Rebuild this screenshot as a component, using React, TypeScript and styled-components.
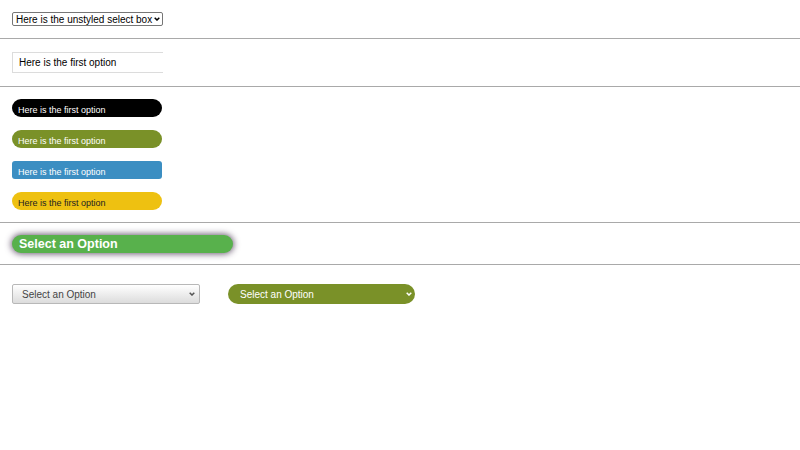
import React from "react";
import styled, { createGlobalStyle } from "styled-components";

const Global = createGlobalStyle`
  html, body { margin: 0; padding: 0; background: #fff; }
  body { font-family: "Liberation Sans", Arial, sans-serif; }
`;

const Page = styled.div`
  display: flex;
  flex-direction: column;
  width: 800px;
`;

const Section = styled.div<{ $pt: number; $pb: number; $gap?: number; $row?: boolean }>`
  display: flex;
  flex-direction: ${(p) => (p.$row ? "row" : "column")};
  align-items: flex-start;
  gap: ${(p) => p.$gap ?? 0}px;
  padding: ${(p) => p.$pt}px 12px ${(p) => p.$pb}px 12px;
`;

const Divider = styled.div`
  height: 1px;
  background: #a9a9a9;
`;

const Unstyled = styled.select`
  appearance: none;
  font-family: "Liberation Sans", Arial, sans-serif;
  font-size: 10px;
  width: 151px;
  height: 14px;
  padding: 0 0 0 3px;
  border: 1px solid #767676;
  border-radius: 2px;
  background: #fff;
  color: #000;
  outline: none;
`;

const Clip = styled.div`
  width: 151px;
  height: 21px;
  overflow: hidden;
`;

const BorderedSelect = styled.select`
  appearance: none;
  width: 190px;
  height: 21px;
  border: 1px solid #dcdcdc;
  background: #fff;
  padding: 0 0 0 6px;
  font-family: "Liberation Sans", Arial, sans-serif;
  font-size: 10px;
  color: #000;
  outline: none;
`;

const Pill = styled.div<{ $bg: string; $radius: number }>`
  width: 150px;
  height: 18px;
  overflow: hidden;
  background: ${(p) => p.$bg};
  border-radius: ${(p) => p.$radius}px;
`;

const PillSelect = styled.select<{ $fg: string }>`
  appearance: none;
  width: 180px;
  height: 18px;
  border: none;
  background: transparent;
  padding: 0 0 0 6px;
  font-family: "Liberation Sans", Arial, sans-serif;
  font-size: 9px;
  color: ${(p) => p.$fg};
  outline: none;
`;

const BigGreen = styled.select`
  appearance: none;
  width: 221px;
  height: 18px;
  border: none;
  border-radius: 9px;
  background: #58b14c;
  box-shadow: 0 0 6px 1px rgba(60, 40, 70, 0.75);
  padding: 0 0 0 7px;
  font-family: "Liberation Sans", Arial, sans-serif;
  font-weight: bold;
  font-size: 12.5px;
  color: #fff;
  outline: none;
`;

const Wrap = styled.div`
  position: relative;
  display: flex;
`;

const Chevron = styled.svg<{ $right: number; $color: string }>`
  position: absolute;
  right: ${(p) => p.$right}px;
  top: 50%;
  margin-top: -2px;
  width: 6px;
  height: 4px;
  pointer-events: none;
  stroke: ${(p) => p.$color};
  fill: none;
  stroke-width: 1.5;
`;

const GraySelect = styled.select`
  appearance: none;
  width: 188px;
  height: 20px;
  border: 1px solid #b8b8b8;
  border-radius: 2px;
  background: linear-gradient(#ffffff, #dcdcdc);
  padding: 0 4px 0 9px;
  font-family: "Liberation Sans", Arial, sans-serif;
  font-size: 10px;
  color: #444;
  outline: none;
`;

const OliveSelect = styled.select`
  appearance: none;
  width: 187px;
  height: 20px;
  border: none;
  border-radius: 10px;
  background: #7a9128;
  padding: 0 2px 0 12px;
  font-family: "Liberation Sans", Arial, sans-serif;
  font-size: 10px;
  color: #fff;
  outline: none;
`;

const pills = [
  { bg: "#000000", fg: "#ffffff", r: 9 },
  { bg: "#7a9128", fg: "#ffffff", r: 9 },
  { bg: "#3b8ec2", fg: "#ffffff", r: 3 },
  { bg: "#eec111", fg: "#222222", r: 9 },
];

const ChevronIcon = ({ right, color }: { right: number; color: string }) => (
  <Chevron $right={right} $color={color} viewBox="0 0 6 4">
    <path d="M0.7 0.7 L3 3 L5.3 0.7" />
  </Chevron>
);

export default function App() {
  return (
    <>
      <Global />
      <Page>
        <Section $pt={12} $pb={12}>
          <Wrap>
            <Unstyled defaultValue="a">
              <option value="a">Here is the unstyled select box</option>
              <option value="b">The second option</option>
            </Unstyled>
            <ChevronIcon right={3} color="#000" />
          </Wrap>
        </Section>
        <Divider />
        <Section $pt={13} $pb={13}>
          <Clip>
            <BorderedSelect defaultValue="a">
              <option value="a">Here is the first option</option>
              <option value="b">The second option</option>
            </BorderedSelect>
          </Clip>
        </Section>
        <Divider />
        <Section $pt={12} $pb={12} $gap={13}>
          {pills.map((p, i) => (
            <Pill key={i} $bg={p.bg} $radius={p.r}>
              <PillSelect $fg={p.fg} defaultValue="a">
                <option value="a">Here is the first option</option>
                <option value="b">The second option</option>
              </PillSelect>
            </Pill>
          ))}
        </Section>
        <Divider />
        <Section $pt={12} $pb={11}>
          <BigGreen defaultValue="">
            <option value="">Select an Option</option>
            <option value="1">Option 1</option>
          </BigGreen>
        </Section>
        <Divider />
        <Section $pt={19} $pb={12} $row $gap={28}>
          <Wrap>
            <GraySelect defaultValue="">
              <option value="">Select an Option</option>
              <option value="1">Option 1</option>
            </GraySelect>
            <ChevronIcon right={5} color="#555" />
          </Wrap>
          <Wrap>
            <OliveSelect defaultValue="">
              <option value="">Select an Option</option>
              <option value="1">Option 1</option>
            </OliveSelect>
            <ChevronIcon right={3} color="#fff" />
          </Wrap>
        </Section>
      </Page>
    </>
  );
}
